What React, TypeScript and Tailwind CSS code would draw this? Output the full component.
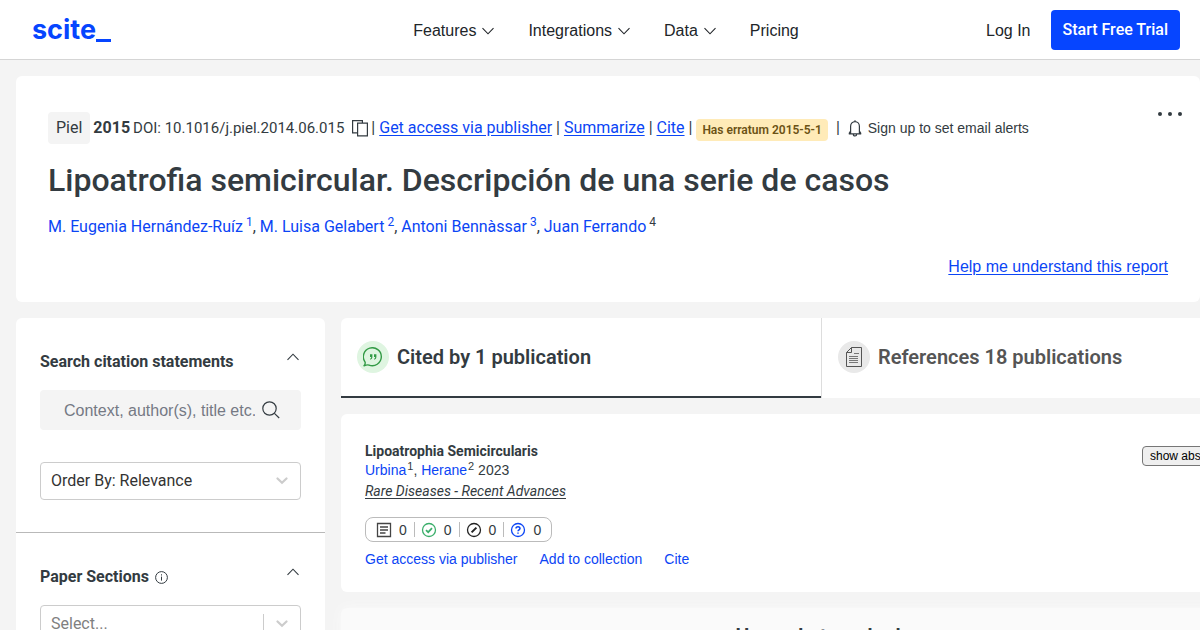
import type { ReactNode } from 'react'

function Chevron({ up = false }: { up?: boolean }) {
  return (
    <svg width="12" height="8" viewBox="0 0 12 8" fill="none" stroke="currentColor" strokeWidth="1.1" aria-hidden="true">
      {up ? <path d="M.5 6.8 6 1.2l5.500 5.600" /> : <path d="M.5 1.200 6 6.800l5.500-5.600" />}
    </svg>
  )
}

function SelectArrow() {
  return (
    <svg className="pointer-events-none" width="12" height="8" viewBox="0 0 12 8" fill="none" stroke="#ccc" strokeWidth="2.200" strokeLinecap="round" aria-hidden="true">
      <path d="M1.500 1.500 6 5.800l4.500-4.300" />
    </svg>
  )
}

function CopyIcon() {
  return (
    <svg width="16" height="17" viewBox="0 0 16 17" fill="none" stroke="currentColor" strokeWidth="1.200" aria-hidden="true">
      <path d="M5 12.800H.6V.6h9.800V3M5.600 3.100h9.800v12.800H5.600z" />
    </svg>
  )
}

function BellIcon() {
  return (
    <svg width="14" height="17" viewBox="0 0 14 17" fill="none" stroke="currentColor" strokeWidth="1.200" aria-hidden="true">
      <path d="M7 .2v1.300M.8 13.800h12.400M2.600 13.600V6.200a4.400 4.600 0 0 1 8.800 0v7.400M2.600 11.200 1 13.600M11.400 11.200l1.600 2.400M5.300 14a1.700 2 0 0 0 3.400 0" />
    </svg>
  )
}

function SpeechIcon() {
  return (
    <svg width="20" height="20" viewBox="0 0 20 20" fill="none" stroke="#329a45" strokeWidth="1.400" aria-hidden="true">
      <path d="M1 18.800c1-1 1.400-2.300 1.100-3.700A9 9 0 1 1 6 18.100c-1.500-.6-3-.1-5 .7Z" strokeLinejoin="round" />
      <path d="M7 7.200h2.400v2.600c0 1.600-.7 2.600-2.200 3v-1c.7-.3 1-.9 1-1.700H7zM11 7.200h2.400v2.600c0 1.600-.7 2.600-2.200 3v-1c.7-.3 1-.9 1-1.700H11z" fill="#329a45" stroke="none" />
    </svg>
  )
}

function PaperIcon() {
  return (
    <svg width="16" height="20" viewBox="0 0 16 20" fill="none" stroke="#555" aria-hidden="true">
      <path d="M5.500.5h10v19H.5v-14zM5.500.5v5h-5" />
      <path d="M8 6.500h5M3 9.500h9M3 11.500h9M3 13.500h9M3 15.500h9" stroke="#777" />
    </svg>
  )
}

function Tally({ label, children, last = false }: { label: string; children: ReactNode; last?: boolean }) {
  return (
    <li className={last ? 'flex items-center gap-[7px] pl-1.5 pr-2.5' : 'flex items-center gap-[7px] border-r border-[#bbb] pl-1.5 pr-[7px]'} aria-label={label}>
      <svg width="16" height="16" viewBox="0 0 16 16" fill="none" strokeWidth="1.300" aria-hidden="true">
        {children}
      </svg>
      <span>0</span>
    </li>
  )
}

const link = 'text-[#0b45f5]'
const navItems = ['Features', 'Integrations', 'Data']

export default function App() {
  return (
    <div className="min-h-screen overflow-x-clip bg-[#f4f4f4] font-['Liberation_Sans',Arial,sans-serif] text-base text-[#333b41]">
      <header className="flex h-[60px] items-center border-b border-[#d5d5d5] bg-white pl-8 pr-5">
        <div className="flex-1">
          <a href="#" aria-label="scite" className="inline-flex items-end font-['Inter',sans-serif] text-[27px] font-bold leading-8 text-[#0645ff]">
            scite
            <span className="mb-1 h-[3px] w-[15px] bg-[#0645ff]" />
          </a>
        </div>
        <nav className="flex items-center gap-[34px] pt-0.5 text-[#212529]">
          {navItems.map((item) => (
            <button key={item} type="button" className="flex items-center gap-1.5">
              {item}
              <Chevron />
            </button>
          ))}
          <a href="#">Pricing</a>
        </nav>
        <div className="flex flex-1 items-center justify-end gap-5">
          <a href="#" className="pt-0.5 text-[#212529]">Log In</a>
          <a href="#" className="rounded bg-[#0645ff] px-3 py-2 font-['Roboto',sans-serif] font-medium text-white">Start Free Trial</a>
        </div>
      </header>

      <main className="pl-4 pt-4">
        <section className="rounded-md bg-white pb-[23px] pl-8 pt-7">
          <div className="flex items-start justify-between pr-[18px]">
            <div className="flex flex-wrap items-center pt-2 font-['Roboto',sans-serif]">
              <span className="mr-[3px] rounded bg-[#f4f4f4] px-2 py-1">Piel</span>
              <strong className="mr-[3px] font-bold">2015</strong>
              <span className="text-[15px]">DOI: 10.1016/j.piel.2014.06.015</span>
              <button type="button" aria-label="Copy DOI" className="ml-2 mr-[3px]"><CopyIcon /></button>
              <span className="whitespace-pre">
                {'| '}<a href="#" className={link + ' underline underline-offset-2'}>Get access via publisher</a>
                {' | '}<a href="#" className={link + ' underline underline-offset-2'}>Summarize</a>
                {' | '}<a href="#" className={link + ' underline underline-offset-2'}>Cite</a>{' | '}
              </span>
              <span className="mt-1 rounded bg-[#ffebb8] px-1.5 py-0.5 text-xs font-semibold leading-[18px] text-[#6b5215]">Has erratum 2015-5-1</span>
              <span className="ml-2 mr-2">|</span>
              <button type="button" className="flex items-center gap-1.5 font-['Liberation_Sans',Arial,sans-serif] text-sm"><BellIcon />Sign up to set email alerts</button>
            </div>
            <button type="button" aria-label="More options" className="py-2">
              <svg width="24" height="4" viewBox="0 0 24 4" fill="currentColor" aria-hidden="true">
                <circle cx="2" cy="2" r="2" /><circle cx="12" cy="2" r="2" /><circle cx="22" cy="2" r="2" />
              </svg>
            </button>
          </div>
          <h1 className="mt-4 font-['Roboto',sans-serif] text-[32px] font-medium leading-10">Lipoatrofia semicircular. Descripción de una serie de casos</h1>
          <p className="mt-[15px] font-['Roboto',sans-serif] leading-6">
            <a href="#" className={link}>M. Eugenia Hernández-Ruíz<sup className="ml-[3px] text-xs">1</sup></a>,{' '}
            <a href="#" className={link}>M. Luisa Gelabert<sup className="ml-[3px] text-xs">2</sup></a>,{' '}
            <a href="#" className={link}>Antoni Bennàssar<sup className="ml-[3px] text-xs">3</sup></a>,{' '}
            <a href="#" className={link}>Juan Ferrando</a><sup className="ml-[3px] text-xs">4</sup>
          </p>
          <p className="mt-4 pr-8 text-right leading-6">
            <a href="#" className={link + ' underline underline-offset-2'}>Help me understand this report</a>
          </p>
        </section>

        <div className="mt-4 flex items-start gap-4">
          <aside className="w-[309px] shrink-0 rounded-md bg-white">
            <section className="border-b border-[#b9b9b9] px-6 py-8">
              <div className="flex items-start justify-between">
                <h2 className="font-['Roboto',sans-serif] font-bold leading-6">Search citation statements</h2>
                <button type="button" aria-label="Collapse search" className="mr-0.5 pt-[3px]"><Chevron up /></button>
              </div>
              <label className="mt-4 flex h-10 items-center gap-[7px] rounded bg-[#f4f4f4] pl-6 pr-[21px]">
                <input aria-label="Search citation statements" placeholder="Context, author(s), title etc." className="min-w-0 flex-1 bg-transparent pt-0.5 outline-none placeholder:text-[#757984]" />
                <svg width="18" height="18" viewBox="0 0 18 18" fill="none" stroke="currentColor" strokeWidth="1.200" aria-hidden="true">
                  <circle cx="7.500" cy="7.500" r="6.700" /><path d="m12.400 12.400 4.800 4.600" />
                </svg>
              </label>
              <div className="mt-8 grid h-[38px] items-center rounded border border-[#ccc] text-[#333]">
                <select aria-label="Order" className="col-start-1 row-start-1 w-full appearance-none bg-transparent pl-2.5 font-['Roboto',sans-serif] outline-none">
                  <option>Order By: Relevance</option>
                </select>
                <span className="pointer-events-none col-start-1 row-start-1 mr-3 justify-self-end"><SelectArrow /></span>
              </div>
            </section>
            <section className="px-6 py-8">
              <div className="flex items-start justify-between">
                <h2 className="flex items-center gap-1.5 font-['Roboto',sans-serif] font-bold leading-6">
                  Paper Sections
                  <svg width="13" height="13" viewBox="0 0 13 13" fill="none" stroke="currentColor" aria-hidden="true">
                    <circle cx="6.500" cy="6.500" r="5.900" /><path d="M6.500 5.600v4M6.500 3.300v1.200" />
                  </svg>
                </h2>
                <button type="button" aria-label="Collapse paper sections" className="mr-0.5 pt-[3px]"><Chevron up /></button>
              </div>
              <div className="mt-4 grid h-[38px] items-center rounded border border-[#ccc] text-[#808080]">
                <select aria-label="Paper sections" className="col-start-1 row-start-1 w-full appearance-none bg-transparent pl-2.5 font-['Roboto',sans-serif] outline-none">
                  <option>Select...</option>
                </select>
                <span className="pointer-events-none col-start-1 row-start-1 my-2 flex items-center justify-self-end self-stretch border-l border-[#ccc] pl-3 pr-3"><SelectArrow /></span>
              </div>
            </section>
          </aside>

          <div className="min-w-[960px] flex-1">
            <div role="tablist" className="grid h-20 grid-cols-2 rounded-md bg-white font-['Roboto',sans-serif] text-xl font-semibold">
              <button type="button" role="tab" aria-selected="true" className="flex items-center gap-2 border-b-2 border-[#333b41] pl-4">
                <span className="flex size-8 items-center justify-center rounded-full bg-[#dff5e1]"><SpeechIcon /></span>
                Cited by 1 publication
              </button>
              <button type="button" role="tab" aria-selected="false" className="flex items-center gap-2 border-l border-[#ddd] pb-0.5 pl-4 text-[#555]">
                <span className="flex size-8 items-center justify-center rounded-full bg-[#e9e9e9]"><PaperIcon /></span>
                References 18 publications
              </button>
            </div>

            <article className="mt-4 flex items-start justify-between rounded-md bg-white pb-[23px] pl-6 pr-[69px] pt-7 text-sm">
              <div>
                <h3 className="font-['Roboto',sans-serif] font-bold leading-[18px]">Lipoatrophia Semicircularis</h3>
                <p className="leading-5">
                  <a href="#" className={link}>Urbina</a><sup className="ml-px text-[11px]">1</sup>,{' '}
                  <a href="#" className={link}>Herane</a><sup className="ml-px text-[11px]">2</sup> 2023
                </p>
                <p className="leading-[22px]"><a href="#" className="font-['Roboto',sans-serif] italic underline underline-offset-2">Rare Diseases - Recent Advances</a></p>
                <ul className="mt-[15px] inline-flex h-[25px] rounded-lg border border-[#bbb] py-1 pl-1 leading-4">
                  <Tally label="Total"><path d="M1.500 1.500h13v13h-13zM4 5h8M4 8h8M4 11h5.500" stroke="#444" /></Tally>
                  <Tally label="Supporting"><g stroke="#3aae6a"><circle cx="8" cy="8" r="6.500" /><path d="m5 8.200 2.200 2 3.800-4" strokeWidth="1.700" /></g></Tally>
                  <Tally label="Contrasting"><g stroke="#222"><circle cx="8" cy="8" r="6.500" /><path d="m5.600 10.400 4.800-4.800" strokeWidth="2" /></g></Tally>
                  <Tally label="Unclassified" last><g stroke="#0b45f5"><circle cx="8" cy="8" r="6.500" /><path d="M6 6.500c0-2.400 4-2.300 4 0 0 1.300-2 1.300-2 2.700M8 10.400v1.400" strokeWidth="1.500" /></g></Tally>
                </ul>
                <div className="mt-1.5 flex gap-[22px] leading-5">
                  <a href="#" className={link}>Get access via publisher</a>
                  <a href="#" className={link}>Add to collection</a>
                  <a href="#" className={link}>Cite</a>
                </div>
              </div>
              <button type="button" className="mt-1 rounded-sm border border-[#767676] bg-[#efefef] px-[7px] text-xs leading-[18px] text-black">show abstract</button>
            </article>

            <section className="mt-4 rounded-md bg-[#fafafa] pt-3.5 text-center shadow-[0_0_12px_#fafafa]">
              <h2 className="font-['Roboto',sans-serif] text-[21px] font-semibold leading-7">Upgrade to unlock</h2>
            </section>
          </div>
        </div>
      </main>
    </div>
  )
}
